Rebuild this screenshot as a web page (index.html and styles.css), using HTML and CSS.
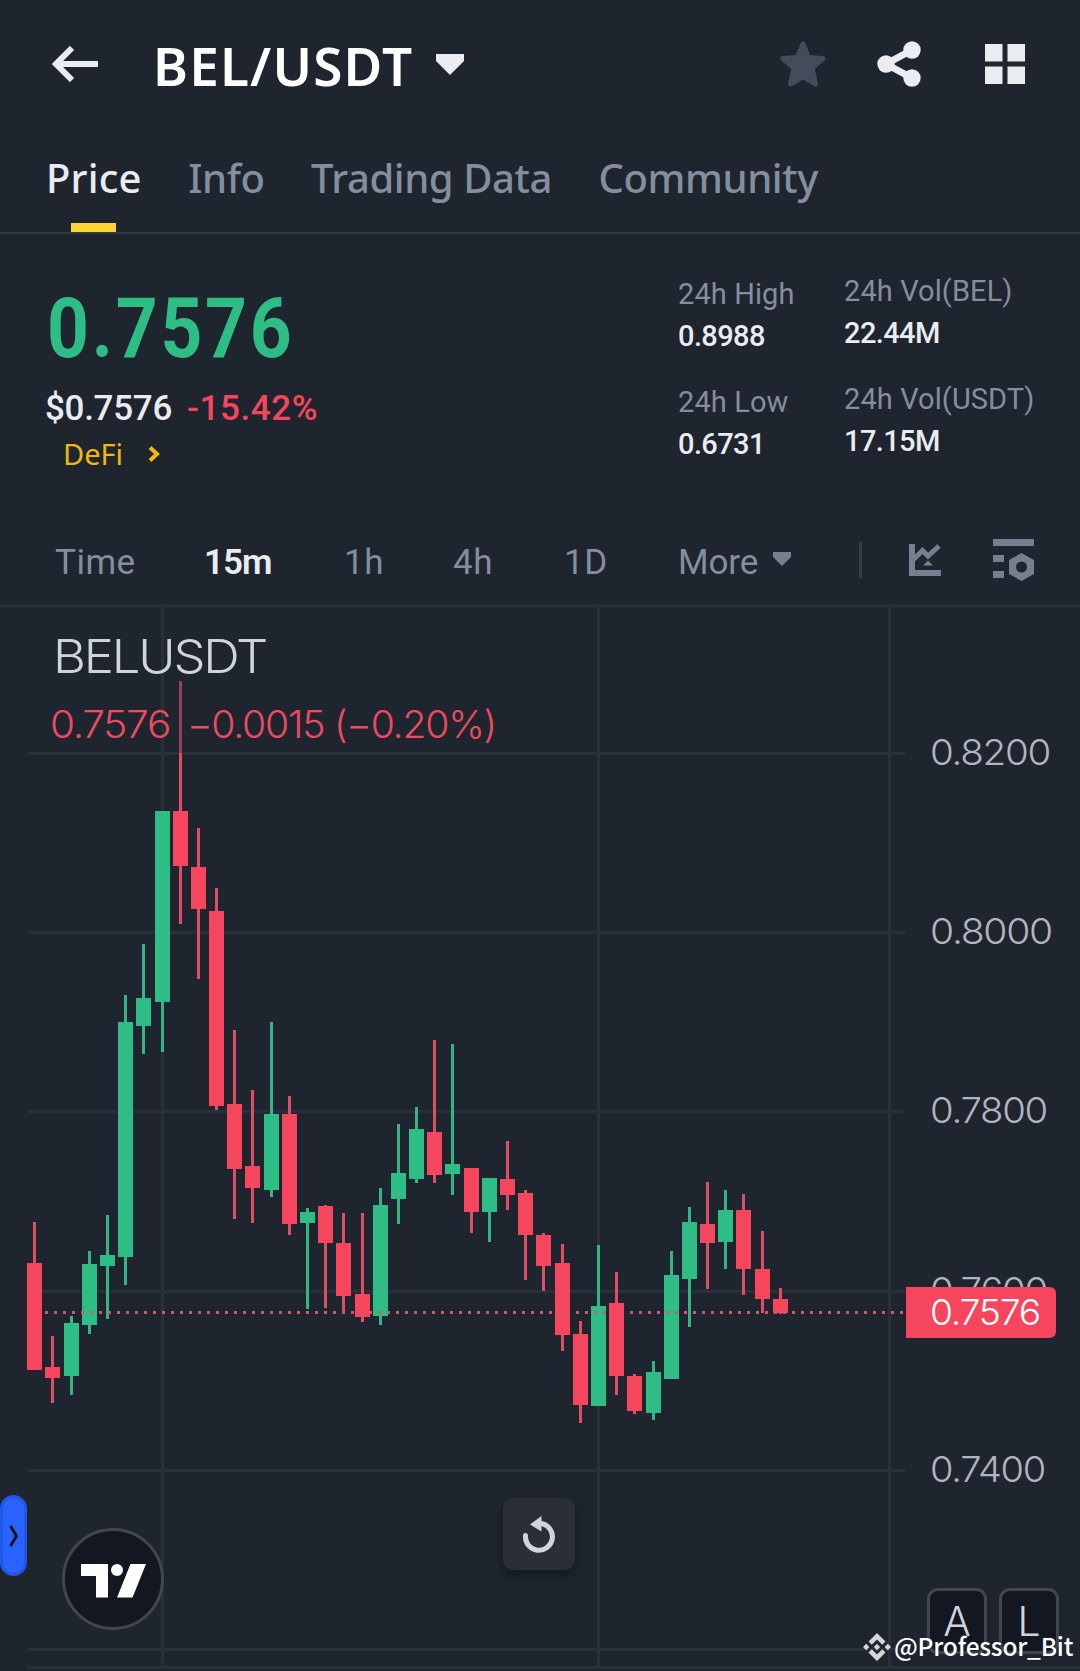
FILE: index.html
```html
<!DOCTYPE html>
<html lang="en">
<head>
  <meta charset="UTF-8" />
  <meta name="viewport" content="width=device-width, initial-scale=1.0" />
  <title>BEL/USDT</title>
  <link rel="stylesheet" href="styles.css">
</head>
<body>
  <header class="header">
    <svg class="back" width="46" height="36" viewBox="0 0 46 36">
      <path d="M20 2 L4 18 L20 34 M4 18 H46" />
    </svg>
    <h1>BEL/USDT</h1>
    <svg class="caret" width="28" height="21" viewBox="0 0 28 21">
      <path d="M0 0 H28 V7 L14 21 L0 7 Z" />
    </svg>
    <div class="header-icons">
      <svg width="46" height="46" viewBox="0 0 46 46">
        <path class="star" d="M23 3 L28.5 16.5 L43 17.5 L32 27 L35.5 43 L23 35.5 L10.5 43 L14 27 L3 17.5 L17.5 16.5 Z" />
      </svg>
      <svg width="44" height="46" viewBox="0 0 44 46">
        <path class="share-line" d="M35 9 L9 23 L35 37" />
        <circle cx="35" cy="9" r="8.7" />
        <circle cx="9" cy="23" r="8.7" />
        <circle cx="35" cy="37" r="8.7" />
      </svg>
      <svg width="40" height="40" viewBox="0 0 40 40">
        <path d="M0 0 H17.5 V17.5 H0 Z M22.5 0 H40 V17.5 H22.5 Z M0 22.5 H17.5 V40 H0 Z M22.5 22.5 H40 V40 H22.5 Z" />
      </svg>
    </div>
  </header>

  <nav class="tabs">
    <a class="tab active">Price</a>
    <a class="tab">Info</a>
    <a class="tab">Trading Data</a>
    <a class="tab">Community</a>
  </nav>

  <section class="summary">
    <div class="price-box">
      <div class="last-price">0.7576</div>
      <div class="sub-price"><span>$0.7576</span><span class="change">-15.42%</span></div>
      <div class="tag">
        DeFi
        <svg width="12" height="16" viewBox="0 0 12 16"><path d="M2 1.5 L9 8 L2 14.5" /></svg>
      </div>
    </div>
    <div class="stats">
      <div class="stat"><span class="label">24h High</span><span class="value">0.8988</span></div>
      <div class="stat"><span class="label">24h Low</span><span class="value">0.6731</span></div>
    </div>
    <div class="stats stats-vol">
      <div class="stat"><span class="label">24h Vol(BEL)</span><span class="value">22.44M</span></div>
      <div class="stat"><span class="label">24h Vol(USDT)</span><span class="value">17.15M</span></div>
    </div>
  </section>

  <div class="intervals">
    <span>Time</span>
    <span class="active">15m</span>
    <span>1h</span>
    <span>4h</span>
    <span>1D</span>
    <span class="more">More
      <svg width="18" height="14" viewBox="0 0 18 14"><path d="M0 0 H18 V5 L9 14 L0 5 Z" /></svg>
    </span>
    <i class="divider"></i>
    <svg width="32" height="32" viewBox="0 0 32 32">
      <path d="M0 0 H6 V26 H32 V32 H0 Z" />
      <path class="trend" d="M4 16 L13.5 6.5 L19 12 L30 2" />
      <path d="M19 16.5 L24 21.5 H14 Z" />
    </svg>
    <svg width="41" height="42" viewBox="0 0 41 42">
      <path d="M0 0 H41 V7 H0 Z M0 16 H11 V23 H0 Z M0 32 H11 V39 H0 Z" />
      <path fill-rule="evenodd" d="M28.5 14 L41 21 V35 L28.5 42 L16 35 V21 Z M28.5 22.5 A5.5 5.5 0 1 0 28.5 33.5 A5.5 5.5 0 1 0 28.5 22.5 Z" />
    </svg>
  </div>

  <main class="chart">
    <svg class="plot" width="1080" height="1067" viewBox="0 604 1080 1067">
      <g class="grid">
        <path d="M27 753.5 H905 M27 932.5 H905 M27 1111.5 H905 M27 1291.5 H905 M27 1470.5 H905 M27 1649.5 H905" />
        <path d="M162.5 604 V1667 M598.5 604 V1667 M889.5 604 V1667" />
        <path d="M0 606 H1080 M27 1667.5 H1080" />
      </g>
      <g id="candles"></g>
      <rect class="legend-shade" x="178" y="676" width="6" height="77" />
      <path class="last-line" d="M45 1312.5 H904" />

      <text class="symbol" x="53" y="673" textLength="213" lengthAdjust="spacingAndGlyphs">BELUSDT</text>
      <text class="quote" x="50" y="738" textLength="120" lengthAdjust="spacingAndGlyphs">0.7576</text>
      <text class="quote" x="187" y="738" textLength="309" lengthAdjust="spacingAndGlyphs">−0.0015 (−0.20%)</text>

      <g class="axis">
        <text x="930" y="765" textLength="120" lengthAdjust="spacingAndGlyphs">0.8200</text>
        <text x="930" y="944" textLength="122" lengthAdjust="spacingAndGlyphs">0.8000</text>
        <text x="930" y="1123" textLength="117" lengthAdjust="spacingAndGlyphs">0.7800</text>
        <text x="930" y="1303" textLength="117" lengthAdjust="spacingAndGlyphs">0.7600</text>
        <text x="930" y="1482" textLength="115" lengthAdjust="spacingAndGlyphs">0.7400</text>
      </g>
      <path class="price-tag" d="M906 1287 H1049 Q1056 1287 1056 1294 V1331 Q1056 1338 1049 1338 H906 Z" />
      <text class="price-tag-text" x="930" y="1325" textLength="110" lengthAdjust="spacingAndGlyphs">0.7576</text>
    </svg>

    <div class="drawer-handle">
      <svg width="10" height="22" viewBox="0 0 10 22"><path d="M1.5 1 L7.5 11 L1.5 21" /></svg>
    </div>
    <div class="tv-logo">
      <svg width="65" height="34" viewBox="0 0 65 34">
        <path d="M0 0 H27 V33.5 H15 V12 H0 Z M49.5 0 H65 L51.5 33.5 H36 Z" />
        <circle cx="36" cy="6" r="6" />
      </svg>
    </div>
    <div class="reset">
      <svg width="34" height="38" viewBox="0 0 34 38">
        <path class="arc" d="M19.5 7.5 A13.5 13.5 0 1 1 3.5 19.5" />
        <path d="M8 8.5 L19.5 0 V15.5 Z" />
      </svg>
    </div>
    <div class="scale-buttons">
      <span>A</span>
      <span>L</span>
    </div>
    <div class="watermark">
      <svg width="28" height="28" viewBox="0 0 28 28">
        <path d="M14 0 L22.5 8.5 L19.2 11.8 L14 6.6 L8.8 11.8 L5.5 8.5 Z M14 28 L22.5 19.5 L19.2 16.2 L14 21.4 L8.8 16.2 L5.5 19.5 Z M3.2 10.8 L6.4 14 L3.2 17.2 L0 14 Z M24.8 10.8 L28 14 L24.8 17.2 L21.6 14 Z M14 10.8 L17.2 14 L14 17.2 L10.8 14 Z" />
      </svg>
      <span>@Professor_Bit</span>
    </div>
  </main>
  <script src="chart.js"></script>
</body>
</html>
```

FILE: styles.css
```css
body {
  margin: 0;
  width: 1080px;
  height: 1671px;
  overflow: hidden;
  background-color: #1e252f;
  color: #eaecef;
  font-family: Roboto, sans-serif;
}

svg {
  display: block;
  flex: none;
  fill: #eaecef;
}

.header {
  display: flex;
  align-items: center;
  height: 128px;
  padding: 0 55px 0 52px;
}

.header h1 {
  margin: 0 0 0 55px;
  padding-top: 3px;
  width: 262px;
  font-family: "Noto Sans", sans-serif;
  font-size: 53px;
  font-weight: 600;
  line-height: 72px;
  letter-spacing: 1.2px;
  color: #fff;
}

.back path {
  fill: none;
  stroke: #eaecef;
  stroke-width: 6;
}

.caret {
  margin-left: 21px;
}

.header-icons {
  display: flex;
  align-items: center;
  margin-left: auto;
}

.header-icons svg + svg {
  margin-left: 51px;
}

.header-icons svg:last-child {
  margin-left: 64px;
}

.star {
  fill: #434c5a;
  stroke: #434c5a;
  stroke-width: 5;
  stroke-linejoin: round;
}

.share-line {
  fill: none;
  stroke: #eaecef;
  stroke-width: 7;
}

.tabs {
  display: flex;
  gap: 46.5px;
  height: 104px;
  padding-left: 46px;
  border-bottom: 2px solid #323943;
  font-family: "Noto Sans", sans-serif;
  font-size: 40px;
  font-weight: 500;
  line-height: 99px;
  letter-spacing: -0.4px;
  color: #848e9c;
}

.tab.active {
  display: flex;
  flex-direction: column;
  align-items: center;
  letter-spacing: 0.2px;
  color: #eaecef;
}

.tab.active::after {
  content: "";
  width: 45px;
  height: 9px;
  margin-top: -4px;
  background: #fcd535;
}

.summary {
  display: flex;
  height: 282px;
}

.price-box {
  width: 678px;
  padding: 45px 0 0 45px;
  box-sizing: border-box;
}

/* squeezed to get the narrow ticker digits */
.last-price {
  margin-left: 2px;
  font-size: 84px;
  font-weight: 700;
  line-height: 100px;
  letter-spacing: 3.2px;
  transform: scaleX(0.87);
  transform-origin: left;
  color: #2ebd85;
}

.sub-price {
  display: flex;
  gap: 15px;
  margin-top: 9px;
  font-size: 35px;
  font-weight: 500;
  line-height: 42px;
  letter-spacing: -0.3px;
}

.change {
  letter-spacing: 0.6px;
  color: #f6465d;
}

.tag {
  display: flex;
  align-items: center;
  gap: 25px;
  margin-top: 4px;
  padding-left: 18px;
  font-family: "Noto Sans", sans-serif;
  font-size: 29px;
  line-height: 40px;
  color: #f0b90b;
}

.tag svg path {
  fill: none;
  stroke: #f0b90b;
  stroke-width: 4;
}

.stats {
  display: flex;
  flex-direction: column;
  gap: 24px;
  width: 166px;
  padding-top: 39px;
  font-size: 29px;
}

.stats-vol {
  padding-top: 36px;
  width: 230px;
}

.stat {
  display: flex;
  flex-direction: column;
  line-height: 42px;
  white-space: nowrap;
}

.stat .label {
  color: #848e9c;
  letter-spacing: 0.1px;
}

.stat .value {
  font-weight: 500;
  letter-spacing: -0.6px;
}

.intervals {
  display: grid;
  grid-template-columns: 149px 140px 109px 111px 114px 181px 50px 84px 41px;
  align-items: center;
  height: 88px;
  padding-left: 55px;
  box-sizing: border-box;
  font-size: 35px;
  line-height: 50px;
  letter-spacing: 0.5px;
  color: #848e9c;
}

.intervals > span {
  padding-top: 6px;
}

.intervals .active {
  font-weight: 600;
  letter-spacing: -1px;
  color: #eaecef;
}

.intervals svg {
  fill: #777e90;
}

.intervals .more {
  display: flex;
  gap: 15px;
  letter-spacing: -0.1px;
}

.more svg {
  margin-top: 14px;
}

.divider {
  width: 3px;
  height: 36px;
  background: #363d49;
}

.trend {
  fill: none;
  stroke: #777e90;
  stroke-width: 5;
}

.chart {
  position: relative;
  height: 1067px;
}

.plot text {
  font-family: Inter, sans-serif;
  font-weight: 300;
  letter-spacing: -1.2px;
}

.grid path {
  fill: none;
  stroke: #2a303a;
  stroke-width: 3;
}

.up { fill: #2ebd85; }
.down { fill: #f6465d; }
.up .wick { fill: #35b486; }
.down .wick { fill: #de4f66; }

.legend-shade {
  fill: #1e252f;
  opacity: 0.35;
}

.last-line {
  stroke: #cc5a6c;
  stroke-width: 3;
  stroke-dasharray: 3 6;
}

.plot .symbol {
  font-size: 47px;
  letter-spacing: -2px;
  fill: #d1d4dc;
}

.plot .quote {
  font-size: 38px;
  fill: #ee4a60;
}

.axis text {
  font-size: 36px;
  fill: #b2b5be;
}

.price-tag {
  fill: #f6465d;
}

.plot .price-tag-text {
  font-size: 36px;
  fill: #fff;
}

.drawer-handle {
  position: absolute;
  left: 0;
  top: 891px;
  display: flex;
  align-items: center;
  justify-content: center;
  width: 27px;
  height: 81px;
  box-sizing: border-box;
  border: 3px solid #2157e6;
  border-radius: 14px;
  background: #2962ff;
}

.drawer-handle path {
  fill: none;
  stroke: #131722;
  stroke-width: 3;
}

.tv-logo {
  position: absolute;
  left: 62px;
  top: 924px;
  display: flex;
  align-items: center;
  justify-content: center;
  width: 102px;
  height: 102px;
  box-sizing: border-box;
  border: 3px solid #434651;
  border-radius: 50%;
  background: #131722;
}

.tv-logo svg {
  margin-top: 3px;
  fill: #fff;
}

.reset {
  position: absolute;
  left: 503px;
  top: 894px;
  display: flex;
  align-items: center;
  justify-content: center;
  width: 72px;
  height: 72px;
  border-radius: 10px;
  background: #2a2e39;
  box-shadow: 0 5px 10px rgba(0, 0, 0, 0.35);
}

.reset svg {
  margin-top: 2px;
  fill: #d1d4dc;
}

.reset .arc {
  fill: none;
  stroke: #d1d4dc;
  stroke-width: 5;
  stroke-linecap: round;
}

.scale-buttons {
  position: absolute;
  left: 927px;
  top: 984px;
  display: flex;
  gap: 12px;
}

.scale-buttons span {
  width: 60px;
  height: 66px;
  box-sizing: border-box;
  border: 3px solid #434651;
  border-radius: 11px;
  background: #131722;
  font-family: Inter, sans-serif;
  font-size: 41px;
  font-weight: 300;
  line-height: 60px;
  text-align: center;
  color: #d1d4dc;
}

.watermark {
  position: absolute;
  left: 863px;
  top: 1023px;
  display: flex;
  align-items: center;
  gap: 3px;
  height: 40px;
  font-family: "Noto Sans CJK SC", sans-serif;
  font-size: 24.5px;
  font-weight: 500;
  line-height: 36px;
  letter-spacing: -0.2px;
  white-space: nowrap;
  color: #fff;
  text-shadow: 0 0 3px #1f2630;
}

.watermark span {
  margin-top: -3px;
}

.watermark svg {
  fill: #d6d6d6;
}
```

FILE: chart.js
```js
// x, high, body top, body bottom, low, direction
const candles = [
  [27, 1222, 1263, 1370, 1370, "down"],
  [45, 1336, 1367, 1378, 1403, "down"],
  [64, 1316, 1323, 1376, 1395, "up"],
  [82, 1251, 1264, 1325, 1334, "up"],
  [100, 1215, 1255, 1266, 1319, "up"],
  [118, 995, 1022, 1257, 1285, "up"],
  [136, 944, 998, 1026, 1054, "up"],
  [155, 811, 811, 1002, 1052, "up"],
  [173, 681, 811, 866, 924, "down"],
  [191, 828, 867, 909, 979, "down"],
  [209, 888, 911, 1106, 1110, "down"],
  [227, 1030, 1104, 1169, 1219, "down"],
  [245, 1090, 1166, 1188, 1223, "down"],
  [264, 1022, 1114, 1190, 1197, "up"],
  [282, 1096, 1114, 1224, 1235, "down"],
  [300, 1208, 1212, 1223, 1309, "up"],
  [318, 1205, 1206, 1243, 1308, "down"],
  [336, 1213, 1243, 1296, 1314, "down"],
  [355, 1213, 1294, 1317, 1322, "down"],
  [373, 1188, 1205, 1316, 1325, "up"],
  [391, 1124, 1173, 1199, 1224, "up"],
  [409, 1107, 1129, 1179, 1183, "up"],
  [427, 1040, 1132, 1175, 1183, "down"],
  [445, 1044, 1164, 1174, 1195, "up"],
  [464, 1168, 1168, 1212, 1233, "down"],
  [482, 1178, 1178, 1212, 1242, "up"],
  [500, 1141, 1179, 1195, 1210, "down"],
  [518, 1190, 1193, 1235, 1280, "down"],
  [536, 1233, 1235, 1266, 1291, "down"],
  [555, 1244, 1263, 1335, 1351, "down"],
  [573, 1321, 1334, 1405, 1423, "down"],
  [591, 1245, 1306, 1406, 1406, "up"],
  [609, 1272, 1303, 1376, 1395, "down"],
  [627, 1374, 1376, 1411, 1414, "down"],
  [646, 1361, 1372, 1413, 1420, "up"],
  [664, 1251, 1275, 1379, 1379, "up"],
  [682, 1207, 1222, 1279, 1327, "up"],
  [700, 1182, 1224, 1243, 1289, "down"],
  [718, 1190, 1210, 1242, 1269, "up"],
  [736, 1194, 1210, 1269, 1295, "down"],
  [755, 1231, 1269, 1299, 1313, "down"],
  [773, 1288, 1299, 1313, 1314, "down"]
];

document.getElementById("candles").innerHTML = candles.map(([x, high, top, bottom, low, dir]) => `
  <g class="${dir}">
    <rect class="wick" x="${x + 6}" y="${high}" width="3" height="${low - high}" />
    <rect x="${x}" y="${top}" width="15" height="${bottom - top}" />
  </g>`).join("");
```
